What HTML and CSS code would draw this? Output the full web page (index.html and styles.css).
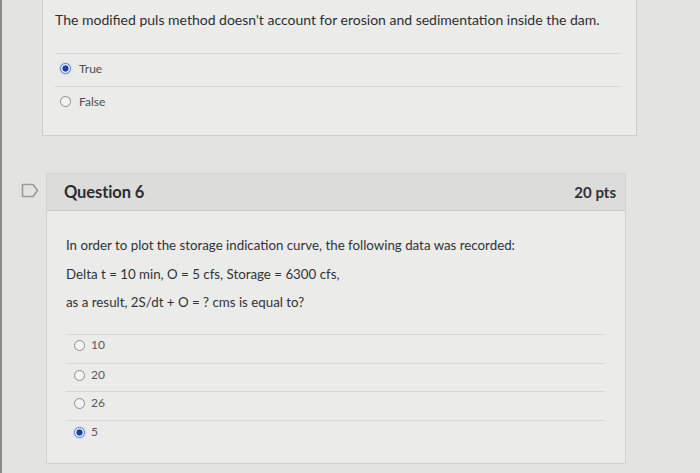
FILE: index.html
```html
<!DOCTYPE html>
<html>
<head>
<meta charset="utf-8">
<link rel="stylesheet" href="styles.css">
</head>
<body>
<div class="page">
  <section class="card card1">
    <p class="qtext">The modified puls method doesn't account for erosion and sedimentation inside the dam.</p>
    <div class="answers answers1">
      <div class="row"><span class="radio on"></span><span class="lbl">True</span></div>
      <div class="row"><span class="radio"></span><span class="lbl">False</span></div>
    </div>
  </section>

  <div class="qwrap">
    <svg class="flag" width="18" height="15" viewBox="0 0 18 15"><path d="M1.5 1.5 H12 L16.5 7.5 L12 13.5 H1.5 Z" fill="none" stroke="#9a9a9a" stroke-width="1.6" stroke-linejoin="round"/></svg>
    <section class="card card2">
      <header class="head">
        <h2 class="title">Question 6</h2>
        <span class="pts">20 pts</span>
      </header>
      <div class="body">
        <div class="lines">
          <p>In order to plot the storage indication curve, the following data was recorded:</p>
          <p>Delta t = 10 min, O = 5 cfs, Storage = 6300 cfs,</p>
          <p>as a result, 2S/dt + O = ? cms is equal to?</p>
        </div>
        <div class="answers answers2">
          <div class="row"><span class="radio"></span><span class="lbl">10</span></div>
          <div class="row"><span class="radio"></span><span class="lbl">20</span></div>
          <div class="row"><span class="radio"></span><span class="lbl">26</span></div>
          <div class="row"><span class="radio on"></span><span class="lbl">5</span></div>
        </div>
      </div>
    </section>
  </div>
</div>
</body>
</html>
```

FILE: styles.css
```css
html, body {
  margin: 0;
  padding: 0;
}
body {
  width: 700px;
  height: 473px;
  overflow: hidden;
  background: #e3e3e1;
  font-family: Lato, "Open Sans", sans-serif;
  color: #2e3338;
  border-left: 2px solid #8a8a8a;
  box-sizing: border-box;
}
.page {
  display: flex;
  flex-direction: column;
}
.card {
  background: #ebebea;
  border: 1px solid #cfcfcd;
  box-sizing: border-box;
}
.card1 {
  margin-left: 40px;
  width: 595px;
  border-top: none;
  padding: 10px 15px 16px 12px;
}
.qtext {
  margin: 0;
  font-size: 14px;
  line-height: 20px;
  color: #2b2f33;
}
.answers .row {
  display: flex;
  align-items: center;
  border-top: 1px solid #d8d8d6;
  box-sizing: border-box;
}
.answers1 {
  margin-top: 23px;
}
.answers1 .row {
  height: 33px;
  padding-left: 5px;
  padding-bottom: 3px;
}
.radio {
  width: 9px;
  height: 9px;
  border: 1.3px solid #8c8c8c;
  border-radius: 50%;
  background: #f4f4f4;
  box-sizing: content-box;
  flex: none;
}
.radio.on {
  border: 1.5px solid #4f7fe0;
  background: radial-gradient(circle, #1f3f9a 0 2.8px, #e9eefa 3.4px);
  box-shadow: 0 0 1.5px #7fa2ea;
}
.lbl {
  font-size: 12px;
  color: #4a4e52;
  margin-left: 8px;
  line-height: 20px;
}
.answers2 .lbl {
  color: #55595d;
  margin-left: 6px;
}
.qwrap {
  display: flex;
  align-items: flex-start;
  margin-top: 37px;
}
.flag {
  margin-left: 19px;
  margin-top: 10px;
  flex: none;
}
.card2 {
  margin-left: 7px;
  width: 580px;
  border-color: #d2d2d0;
}
.head {
  display: flex;
  align-items: center;
  justify-content: space-between;
  height: 37px;
  background: #dcdcdb;
  border-bottom: 1px solid #c9c9c7;
  padding: 0 9px 0 17px;
  box-sizing: border-box;
}
.title {
  margin: 0;
  font-size: 16.5px;
  font-weight: 700;
  color: #2a2e33;
  letter-spacing: -0.1px;
}
.pts {
  font-size: 15px;
  font-weight: 700;
  color: #2e3237;
}
.body {
  padding: 24px 20px 15px 19px;
}
.lines {
  display: flex;
  flex-direction: column;
  gap: 8.5px;
}
.lines p {
  margin: 0;
  font-size: 13.3px;
  line-height: 20px;
  color: #2f3337;
}
.answers2 {
  margin-top: 22px;
  margin-left: 0;
}
.answers2 .row {
  height: 28.5px;
  align-items: flex-start;
  padding-top: 1px;
  padding-left: 8px;
}
.answers2 .radio {
  margin-top: 5px;
}
.answers2 .row:first-child {
  padding-top: 0;
}
```
